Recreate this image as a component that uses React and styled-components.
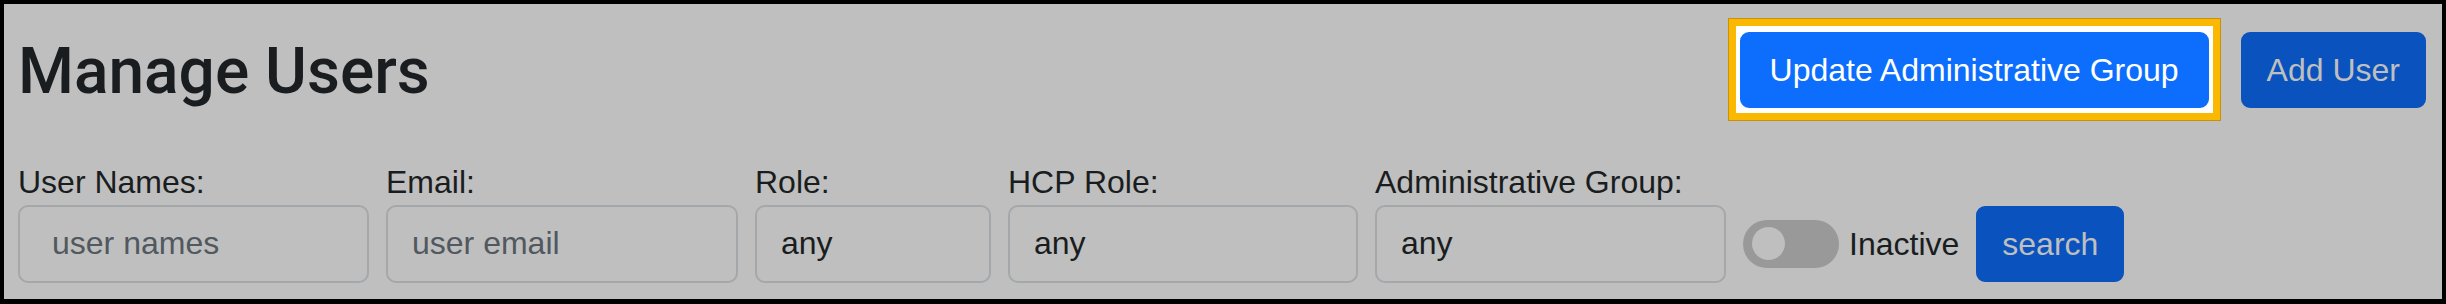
import React from "react";
import styled, { createGlobalStyle } from "styled-components";

const GlobalStyle = createGlobalStyle`
  html, body {
    margin: 0;
    padding: 0;
    background: #bfbfbf;
  }
  * {
    box-sizing: border-box;
  }
`;

const Page = styled.div`
  width: 2446px;
  height: 304px;
  border-style: solid;
  border-color: #000;
  border-width: 4px 4px 5px 4px;
  background: #bfbfbf;
  padding: 28px 16px 0 14px;
  font-family: "Liberation Sans", Arial, sans-serif;
  color: #1a1d20;
`;

const Header = styled.div`
  display: flex;
  justify-content: space-between;
  align-items: flex-start;
`;

const Title = styled.h2`
  margin: 2px 0 0 0;
  font-family: Roboto, "Liberation Sans", sans-serif;
  font-weight: 500;
  font-size: 64px;
  line-height: 1.2;
  color: #1a1d20;
`;

const Actions = styled.div`
  display: flex;
  align-items: flex-start;
  gap: 21px;
`;

/* tour spotlight around the highlighted button */
const Spotlight = styled.span`
  display: inline-flex;
  margin: -13px 0 -12px -11px;
  padding: 6px 4px 5px 4px;
  background: #ffffff;
  border: 7px solid #fbb800;
  outline: 1px solid #c4920c;
`;

const Button = styled.button`
  font-family: "Liberation Sans", Arial, sans-serif;
  font-size: 32px;
  line-height: 48px;
  padding: 12px ${(p) => (p.$wide ? 28 : 24)}px;
  border: 2px solid ${(p) => (p.$highlight ? "#0d6efd" : "#0a53be")};
  border-radius: 9px;
  background: ${(p) => (p.$highlight ? "#0d6efd" : "#0a53be")};
  color: ${(p) => (p.$highlight ? "#ffffff" : "#bfbfbf")};
  white-space: nowrap;
  cursor: pointer;
`;

const Filters = styled.div`
  display: flex;
  align-items: flex-end;
  gap: 17px;
  margin-top: 52px;
`;

const Field = styled.div`
  display: flex;
  flex-direction: column;
  width: ${(p) => p.$width}px;
`;

const Label = styled.label`
  font-size: 32px;
  line-height: 38px;
  margin-bottom: 4px;
  white-space: nowrap;
  color: #1a1d20;
`;

const Input = styled.input`
  height: 78px;
  width: 100%;
  font-family: "Liberation Sans", Arial, sans-serif;
  font-size: 32px;
  color: #1a1d20;
  background: transparent;
  border: 2px solid #a5a8ab;
  border-radius: 10px;
  padding: 0 24px 0 ${(p) => (p.$indent ? 32 : 24)}px;
  outline: none;

  &::placeholder {
    color: #51585e;
  }
`;

const ToggleGroup = styled.div`
  display: flex;
  align-items: center;
  gap: 10px;
  height: 78px;
`;

const Track = styled.span`
  display: flex;
  align-items: center;
  width: 96px;
  height: 48px;
  padding-left: 9px;
  border-radius: 24px;
  background: #999999;
`;

const Knob = styled.span`
  width: 33px;
  height: 33px;
  border-radius: 50%;
  background: #bfbfbf;
`;

const ToggleText = styled.span`
  font-size: 32px;
  line-height: 48px;
  color: #1a1d20;
`;

const SearchButton = styled(Button)`
  margin-bottom: 1px;
`;

const fields = [
  { label: "User Names:", placeholder: "user names", width: 351, indent: true },
  { label: "Email:", placeholder: "user email", width: 352 },
  { label: "Role:", value: "any", width: 236 },
  { label: "HCP Role:", value: "any", width: 350 },
  { label: "Administrative Group:", value: "any", width: 351 },
];

export default function App() {
  return (
    <>
      <GlobalStyle />
      <Page>
        <Header>
          <Title>Manage Users</Title>
          <Actions>
            <Spotlight>
              <Button $highlight $wide>
                Update Administrative Group
              </Button>
            </Spotlight>
            <Button>Add User</Button>
          </Actions>
        </Header>
        <Filters>
          {fields.map((f) => (
            <Field key={f.label} $width={f.width}>
              <Label>{f.label}</Label>
              <Input
                $indent={f.indent}
                placeholder={f.placeholder}
                defaultValue={f.value}
                readOnly={!!f.value}
              />
            </Field>
          ))}
          <ToggleGroup>
            <Track>
              <Knob />
            </Track>
            <ToggleText>Inactive</ToggleText>
          </ToggleGroup>
          <SearchButton>search</SearchButton>
        </Filters>
      </Page>
    </>
  );
}
